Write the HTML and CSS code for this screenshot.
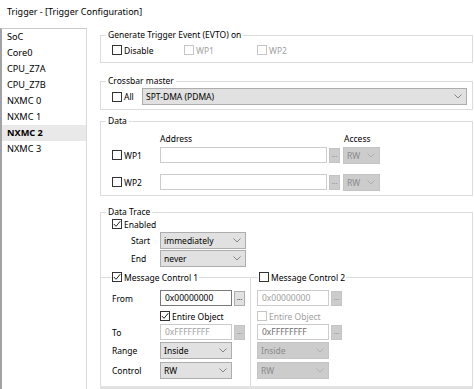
FILE: index.html
```html
<!DOCTYPE html>
<html>
<head>
<meta charset="utf-8">
<link rel="stylesheet" href="styles.css">
</head>
<body>
<div class="title">Trigger - [Trigger Configuration]</div>
<div class="main">
  <div class="tree">
    <div class="node">SoC</div>
    <div class="node">Core0</div>
    <div class="node">CPU_Z7A</div>
    <div class="node">CPU_Z7B</div>
    <div class="node">NXMC 0</div>
    <div class="node">NXMC 1</div>
    <div class="node sel">NXMC 2</div>
    <div class="node">NXMC 3</div>
  </div>
  <div class="pane">
    <div class="group g1">
      <div class="glabel">Generate Trigger Event (EVTO) on</div>
      <div class="row evto">
        <div class="chk w72"><span class="box"></span><span>Disable</span></div>
        <div class="chk w73 dis"><span class="box"></span><span>WP1</span></div>
        <div class="chk dis"><span class="box"></span><span>WP2</span></div>
      </div>
    </div>

    <div class="group g2">
      <div class="glabel">Crossbar master</div>
      <div class="row xbar">
        <div class="chk w30"><span class="box"></span><span>All</span></div>
        <div class="combo grow"><span>SPT-DMA (PDMA)</span><svg class="chev" width="8" height="5" viewBox="0 0 8 5"><polyline points="0.5,0.5 4,4 7.5,0.5"/></svg></div>
      </div>
    </div>

    <div class="group g3">
      <div class="glabel">Data</div>
      <div class="hdr"><span class="haddr">Address</span><span>Access</span></div>
      <div class="drow first">
        <div class="chk w48"><span class="box"></span><span>WP1</span></div>
        <div class="edit waddr"></div>
        <div class="btn dis">...</div>
        <div class="combo dis wacc"><span>RW</span><svg class="chev" width="8" height="5" viewBox="0 0 8 5"><polyline points="0.5,0.5 4,4 7.5,0.5"/></svg></div>
      </div>
      <div class="drow second">
        <div class="chk w48"><span class="box"></span><span>WP2</span></div>
        <div class="edit waddr"></div>
        <div class="btn dis">...</div>
        <div class="combo dis wacc"><span>RW</span><svg class="chev" width="8" height="5" viewBox="0 0 8 5"><polyline points="0.5,0.5 4,4 7.5,0.5"/></svg></div>
      </div>
    </div>

    <div class="group g4">
      <div class="glabel">Data Trace</div>
      <div class="row enabled">
        <div class="chk"><span class="box"><svg width="8" height="8" viewBox="0 0 8 8"><polyline class="tick" points="0.8,4 3,6.3 7.3,1.2"/></svg></span><span>Enabled</span></div>
      </div>
      <div class="srow s1">
        <span class="slabel">Start</span>
        <div class="combo wstart"><span>immediately</span><svg class="chev" width="8" height="5" viewBox="0 0 8 5"><polyline points="0.5,0.5 4,4 7.5,0.5"/></svg></div>
      </div>
      <div class="srow s2">
        <span class="slabel">End</span>
        <div class="combo wstart"><span>never</span><svg class="chev" width="8" height="5" viewBox="0 0 8 5"><polyline points="0.5,0.5 4,4 7.5,0.5"/></svg></div>
      </div>

      <div class="mc">
        <div class="mcbox mc1">
          <div class="mclabel chk"><span class="box"><svg width="8" height="8" viewBox="0 0 8 8"><polyline class="tick" points="0.8,4 3,6.3 7.3,1.2"/></svg></span><span>Message Control 1</span></div>
          <div class="frow r-from">
            <span class="flabel">From</span>
            <div class="edit on wval">0x00000000</div>
            <div class="btn">...</div>
          </div>
          <div class="frow r-entire">
            <span class="flabel"></span>
            <div class="chk"><span class="box"><svg width="8" height="8" viewBox="0 0 8 8"><polyline class="tick" points="0.8,4 3,6.3 7.3,1.2"/></svg></span><span>Entire Object</span></div>
          </div>
          <div class="frow r-to">
            <span class="flabel">To</span>
            <div class="edit wval">0xFFFFFFFF</div>
            <div class="btn dis">...</div>
          </div>
          <div class="frow r-range">
            <span class="flabel">Range</span>
            <div class="combo wval"><span>Inside</span><svg class="chev" width="8" height="5" viewBox="0 0 8 5"><polyline points="0.5,0.5 4,4 7.5,0.5"/></svg></div>
          </div>
          <div class="frow r-control">
            <span class="flabel">Control</span>
            <div class="combo wval"><span>RW</span><svg class="chev" width="8" height="5" viewBox="0 0 8 5"><polyline points="0.5,0.5 4,4 7.5,0.5"/></svg></div>
          </div>
        </div>
        <div class="mcbox mc2">
          <div class="mclabel chk"><span class="box"></span><span>Message Control 2</span></div>
          <div class="frow r-from">
            <div class="edit wval">0x00000000</div>
            <div class="btn dis">...</div>
          </div>
          <div class="frow r-entire">
            <div class="chk dis"><span class="box"></span><span>Entire Object</span></div>
          </div>
          <div class="frow r-to">
            <div class="edit wval mid">0xFFFFFFFF</div>
            <div class="btn dis">...</div>
          </div>
          <div class="frow r-range">
            <div class="combo dis wval"><span>Inside</span><svg class="chev" width="8" height="5" viewBox="0 0 8 5"><polyline points="0.5,0.5 4,4 7.5,0.5"/></svg></div>
          </div>
          <div class="frow r-control">
            <div class="combo dis wval"><span>RW</span><svg class="chev" width="8" height="5" viewBox="0 0 8 5"><polyline points="0.5,0.5 4,4 7.5,0.5"/></svg></div>
          </div>
        </div>
      </div>
    </div>
  </div>
</div>
</body>
</html>
```

FILE: styles.css
```css
* { box-sizing: border-box; }

body {
  margin: 0;
  width: 474px;
  height: 389px;
  overflow: hidden;
  background: #ffffff;
  font-family: "Noto Sans", "Open Sans", sans-serif;
  font-size: 8.5px;
  color: #000000;
}

.title {
  height: 28px;
  line-height: 24px;
  padding-left: 7px;
  font-size: 9px;
  white-space: nowrap;
}

.main {
  display: flex;
  height: 361px;
}

.tree {
  width: 87px;
  flex: none;
  border-left: 2px solid #a3a3a3;
  border-top: 1px solid #cacaca;
  border-right: 1px solid #dadada;
  font-size: 9.2px;
}

.node {
  height: 16px;
  line-height: 15px;
  padding-left: 5px;
  white-space: nowrap;
}

.node.sel {
  background: #e9e9e9;
  font-weight: bold;
}

.pane {
  flex: 1;
  padding: 0 1px 0 13px;
}

.group {
  border: 1px solid #dcdcdc;
}

.glabel {
  width: max-content;
  margin: -7px 0 0 5px;
  padding: 0 2px;
  height: 12px;
  line-height: 12px;
  background: #ffffff;
  white-space: nowrap;
}

.row {
  display: flex;
  align-items: center;
  padding-left: 11px;
}

.chk {
  display: flex;
  align-items: center;
  white-space: nowrap;
}

.box {
  width: 10px;
  height: 10px;
  flex: none;
  border: 1px solid #333333;
  background: #ffffff;
  margin-right: 2px;
  display: flex;
  align-items: center;
  justify-content: center;
}

.tick {
  fill: none;
  stroke: #222222;
  stroke-width: 1;
}

.dis { color: #a0a0a0; }
.dis .box { border-color: #c6c6c6; }

.w30 { width: 30px; }
.w48 { width: 48px; }
.w72 { width: 72px; }
.w73 { width: 73px; }
.grow { flex: 1; }

/* group 1 */
.g1 { margin-top: 7px; height: 28px; }
.evto { margin-top: 2px; height: 14px; }

/* group 2 */
.g2 { margin-top: 18px; height: 29px; }
.xbar { margin-top: 1px; height: 17px; padding-right: 5px; }

/* group 3 */
.g3 { margin-top: 11px; height: 75px; }
.hdr {
  display: flex;
  margin-top: 6px;
  height: 12px;
  line-height: 12px;
  padding-left: 59px;
}
.haddr { width: 184px; }
.drow {
  display: flex;
  align-items: center;
  height: 16px;
  padding-left: 11px;
}
.drow.first { margin-top: 2px; }
.drow.second { margin-top: 11px; }
.waddr { width: 167px; }
.wacc { width: 37px; margin-left: 3px; }

/* inputs */
.edit {
  height: 16px;
  border: 1px solid #cccccc;
  background: #ffffff;
  padding-left: 4px;
  line-height: 14px;
  color: #a0a0a0;
  white-space: nowrap;
}
.edit.on { border-color: #7a7a7a; color: #000000; }
.edit.mid { color: #6d6d6d; }

.btn {
  width: 11px;
  height: 15px;
  margin-left: 2px;
  border: 1px solid #adadad;
  background: #e1e1e1;
  font-size: 7px;
  line-height: 11px;
  text-align: center;
  color: #333333;
  overflow: hidden;
}
.btn.dis {
  border-color: #c4c4c4;
  background: #cccccc;
  color: #8e8e8e;
}

.combo {
  display: flex;
  align-items: center;
  justify-content: space-between;
  height: 17px;
  border: 1px solid #adadad;
  background: #e1e1e1;
  padding: 0 4px 0 3px;
  white-space: nowrap;
}
.combo.dis {
  border-color: #c4c4c4;
  background: #cccccc;
  color: #8a8a8a;
}
.chev {
  flex: none;
  fill: none;
  stroke: #7a7a7a;
  stroke-width: 0.9;
}
.combo.dis .chev { stroke: #aaaaaa; }

/* group 4 */
.g4 {
  margin-top: 16px;
  height: 177px;
  border-bottom: 3px solid #e2e2e2;
}
.enabled { height: 12px; }
.srow {
  display: flex;
  align-items: center;
  height: 17px;
  padding-left: 30px;
}
.srow.s1 { margin-top: 2px; }
.srow.s2 { margin-top: 1px; }
.slabel { width: 29px; }
.wstart { width: 86px; }

.mc {
  display: flex;
  margin-top: 10px;
  height: 109px;
}
.mcbox { border-top: 1px solid #dcdcdc; }
.mc1 {
  width: 150px;
  flex: none;
  border-right: 1px solid #dcdcdc;
  padding-left: 11px;
}
.mc2 {
  flex: 1;
  padding-left: 6px;
}
.mclabel {
  width: max-content;
  margin-top: -7px;
  height: 12px;
  padding: 0 1px;
  background: #ffffff;
}
.mc1 .mclabel { margin-left: -1px; }
.mc2 .mclabel { margin-left: 1px; }

.frow {
  display: flex;
  align-items: center;
}
.flabel { width: 48px; flex: none; }
.wval { width: 72px; }
.r-from { margin-top: 7px; height: 16px; }
.r-entire { margin-top: 4px; height: 12px; }
.r-to { margin-top: 2px; height: 16px; }
.r-range { margin-top: 2px; height: 17px; }
.r-control { margin-top: 3px; height: 17px; }
```
